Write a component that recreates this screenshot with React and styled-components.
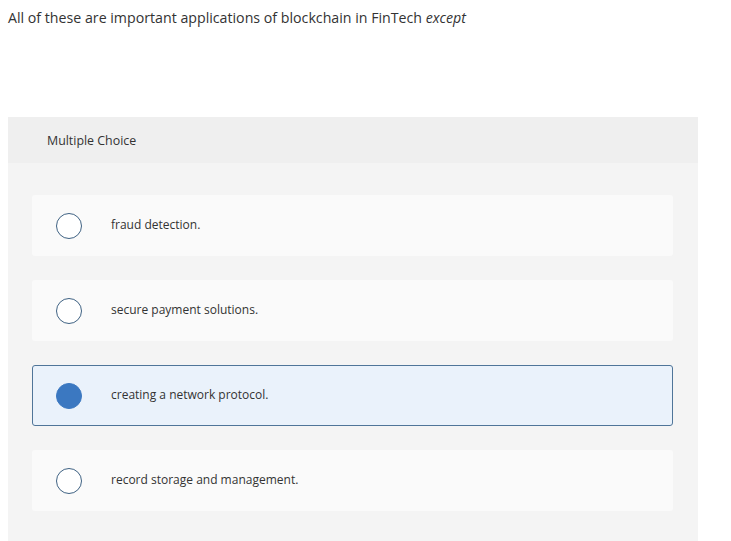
import React from "react";
import styled, { createGlobalStyle } from "styled-components";

const Global = createGlobalStyle`
  html, body { margin: 0; padding: 0; background: #fff; }
  body { font-family: "Open Sans", Lato, sans-serif; color: #333; }
`;

const Page = styled.div`
  padding: 8px 33px 0 8px;
`;

const Question = styled.p`
  margin: 0;
  font-size: 14.2px;
  line-height: 20px;
  color: #333;
  em { font-style: italic; }
`;

const Panel = styled.div`
  margin-top: 89px;
  background: #f4f4f4;
`;

const Header = styled.div`
  height: 46px;
  background: #efefef;
  display: flex;
  align-items: center;
  padding-left: 39px;
  font-size: 12.4px;
  color: #333;
`;

const Options = styled.div`
  display: flex;
  flex-direction: column;
  gap: 24px;
  padding: 32px 25px 40px 24px;
`;

const Option = styled.label`
  box-sizing: border-box;
  height: 61px;
  display: flex;
  align-items: center;
  padding-left: 23px;
  gap: 29px;
  background: ${p => (p.$selected ? "#eaf2fb" : "#fafafa")};
  border: 1px solid ${p => (p.$selected ? "#4f7599" : "transparent")};
  border-radius: 3px;
  font-size: 12px;
  line-height: 16px;
  color: #333;
  span:last-child { margin-top: -2px; }
`;

const Radio = styled.span`
  box-sizing: border-box;
  width: 26px;
  height: 26px;
  border-radius: 50%;
  flex-shrink: 0;
  border: 1px solid ${p => (p.$selected ? "#3b78c1" : "#3f6283")};
  background: ${p => (p.$selected ? "#3b78c1" : "#fff")};
`;

const options = [
  "fraud detection.",
  "secure payment solutions.",
  "creating a network protocol.",
  "record storage and management.",
];

export default function App() {
  return (
    <>
      <Global />
      <Page>
        <Question>
          All of these are important applications of blockchain in FinTech <em>except</em>
        </Question>
        <Panel>
          <Header>Multiple Choice</Header>
          <Options>
            {options.map((t, i) => (
              <Option key={t} $selected={i === 2}>
                <Radio $selected={i === 2} />
                <span>{t}</span>
              </Option>
            ))}
          </Options>
        </Panel>
      </Page>
    </>
  );
}
